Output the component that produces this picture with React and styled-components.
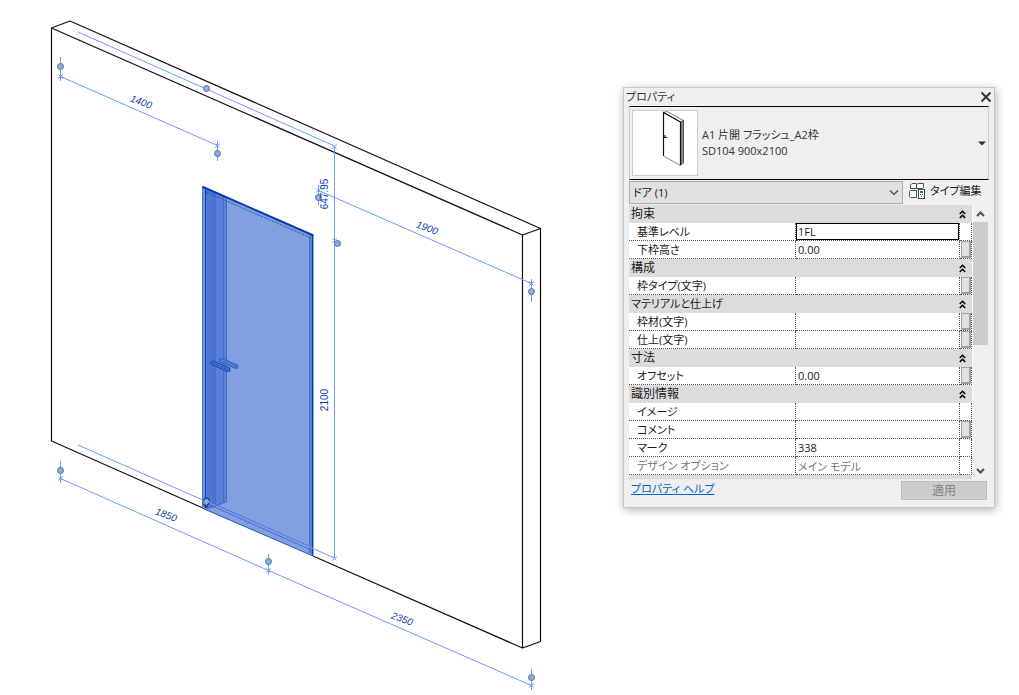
import React, { useState } from 'react';
import styled, { createGlobalStyle } from 'styled-components';

const GlobalStyle = createGlobalStyle`
  * {
    box-sizing: border-box;
  }

  body {
    margin: 0;
    background: #fff;
    color: #1a1a1a;
    font-family: "Open Sans", "Noto Sans CJK JP", sans-serif;
    font-size: 11px;
    line-height: 16px;
    font-feature-settings: "palt";
  }

  button, input, select {
    font: inherit;
    color: inherit;
    font-feature-settings: inherit;
    margin: 0;
    padding: 0;
    border: 0;
    border-radius: 0;
    background: none;
  }
`;

const Page = styled.main`
  display: flex;
  align-items: flex-start;
  padding-right: 24px;
`;

/* ---------- 3D view ---------- */

const View = styled.svg`
  display: block;
  flex: 1;
  min-width: 0;
  height: auto;
`;

const WallLine = styled.path`
  fill: none;
  stroke: #111;
  stroke-width: 1.2;
  stroke-linejoin: round;
`;

const DimLine = styled.path`
  fill: none;
  stroke: #7299fb;
  stroke-width: 1;
`;

const Grip = styled.circle`
  fill: #7db0f5;
  stroke: #68707c;
  stroke-width: 1;
`;

const DimText = styled.text`
  fill: #0a3cab;
  font-family: "Liberation Sans", Arial, sans-serif;
  font-size: 10px;
  font-style: ${props => (props.$slanted ? 'italic' : 'normal')};
  text-anchor: middle;
`;

/* ---------- properties panel ---------- */

const Panel = styled.section`
  flex: 0 0 372px;
  margin-top: 87px;
  padding: 0 5px;
  border: 1px solid #c6c6c6;
  background: #efefef;
  box-shadow: 1px 2px 9px rgba(0, 0, 0, 0.3);
`;

const TitleBar = styled.header`
  display: flex;
  align-items: center;
  justify-content: space-between;
  height: 18px;
  margin: 0 -3px;
`;

const Title = styled.h1`
  margin: 0;
  font-size: 11px;
  font-weight: normal;
  color: #333;
`;

const CloseButton = styled.button`
  display: flex;
  width: 12px;
  height: 12px;
`;

const TypeSelector = styled.button`
  display: flex;
  align-items: center;
  gap: 4px;
  width: 100%;
  height: 74px;
  padding: 0 2px;
  border: 1px solid #ccc;
  border-top-color: #000;
  border-bottom-color: #000;
  text-align: left;
  color: #333;
`;

const Thumbnail = styled.svg`
  flex: none;
  width: 66px;
  height: 66px;
  border: 1px solid #ccc;
  background: #fff;
`;

const TypeName = styled.span`
  flex: 1;
`;

const Line = styled.span`
  display: block;
`;

const Caret = styled.svg`
  flex: none;
  width: 8px;
  height: 5px;
`;

const FilterRow = styled.div`
  display: flex;
  align-items: flex-start;
  height: 25px;
  padding-top: 1px;
  gap: 6px;
`;

const SelectWrap = styled.div`
  position: relative;
  flex: 1;
`;

const FilterSelect = styled.select`
  display: block;
  width: 100%;
  height: 23px;
  padding: 0 3px;
  appearance: none;
  border: 1px solid #adadad;
  background: #e1e1e1;
`;

const SelectArrow = styled.svg`
  position: absolute;
  top: 8px;
  right: 4px;
  width: 10px;
  height: 7px;
  pointer-events: none;
`;

const EditTypeButton = styled.button`
  display: flex;
  align-items: center;
  gap: 4px;
  width: 80px;
  height: 19px;
  white-space: nowrap;
`;

const ListArea = styled.div`
  display: flex;
  gap: 1px;
  height: 274px;
  background: #fafafa;
`;

const Grid = styled.div`
  flex: 1;
  overflow: hidden;
  background: #dcdcdc;
`;

const Table = styled.table`
  width: 100%;
  table-layout: fixed;
  border-collapse: separate;
  border-spacing: 0;
  background: #fff;
`;

const NameCol = styled.col`
  width: 167px;
`;

const ButtonCol = styled.col`
  width: 12px;
`;

const GroupCell = styled.th`
  height: 18px;
  padding: 0 6px 0 2px;
  background: #dcdcdc;
  font-size: ${props => (props.$compact ? '11px' : '12px')};
  font-weight: normal;
  text-align: left;
`;

const GroupBar = styled.div`
  display: flex;
  align-items: center;
  justify-content: space-between;
  height: 18px;
`;

const CollapseButton = styled.button`
  display: flex;
  width: 7px;
  height: 9px;
`;

const NameCell = styled.th`
  height: 18px;
  padding: 0 0 0 8px;
  border-right: 1px dotted #555;
  border-bottom: 1px dotted #555;
  font-weight: normal;
  line-height: 17px;
  text-align: left;
  color: ${props => (props.$muted ? '#777' : '#1a1a1a')};
`;

const ValueCell = styled.td`
  height: 18px;
  padding: 0;
  border-right: 1px dotted #555;
  border-bottom: 1px dotted #555;
`;

const ValueInput = styled.input`
  display: block;
  width: 100%;
  height: 17px;
  padding: ${props => (props.$active ? '0 1px' : '0 2px')};
  border: ${props => (props.$active ? '1px solid #000' : '0')};
  outline: none;
  color: ${props => (props.$muted ? '#777' : '#1a1a1a')};
`;

const MoreButton = styled.button`
  display: block;
  width: 10px;
  height: 17px;
  margin-left: 1px;
  border: 1px solid #a0a0a0;
  border-right-width: 2px;
  border-bottom-width: 2px;
  background: #e1e1e1;
`;

const ScrollBar = styled.div`
  display: flex;
  flex-direction: column;
  width: 16px;
  background: #f0f0f0;
`;

const ScrollButton = styled.button`
  display: flex;
  align-items: center;
  justify-content: center;
  width: 15px;
  height: 17px;
`;

const ScrollTrack = styled.div`
  flex: 1;
`;

const ScrollThumb = styled.div`
  width: 15px;
  height: 123px;
  background: #cdcdcd;
`;

const Footer = styled.footer`
  display: flex;
  align-items: flex-start;
  justify-content: space-between;
  height: 28px;
  padding: 2px 2px 0;
`;

const HelpLink = styled.a`
  color: #0066cc;
  text-decoration: underline;
`;

const ApplyButton = styled.button`
  width: 86px;
  height: 19px;
  border: 1px solid #bfbfbf;
  background: #ccc;
  color: #838383;
  font-size: 12px;
`;

const groups = [
  { title: '拘束', rows: [
    { name: '基準レベル', value: '1FL', active: true },
    { name: '下枠高さ', value: '0.00', more: true },
  ] },
  { title: '構成', rows: [
    { name: '枠タイプ(文字)', value: '', more: true },
  ] },
  { title: 'マテリアルと仕上げ', compact: true, rows: [
    { name: '枠材(文字)', value: '', more: true },
    { name: '仕上(文字)', value: '', more: true },
  ] },
  { title: '寸法', rows: [
    { name: 'オフセット', value: '0.00', more: true },
  ] },
  { title: '識別情報', rows: [
    { name: 'イメージ', value: '' },
    { name: 'コメント', value: '', more: true },
    { name: 'マーク', value: '338' },
    { name: 'デザイン オプション', value: 'メイン モデル', muted: true },
  ] },
];

const grips = [
  [60.5, 66.5], [206.5, 88.5], [217.5, 153.5], [318.5, 197.5], [337.5, 243.5],
  [531.5, 291.5], [60.5, 470.5], [206.5, 501.5], [268.5, 561.5], [531.5, 677.5],
];

// end marks of the dimension lines
const ticks = [
  [60.5, 76.5], [217.5, 145.5], [318.5, 190.5], [531.5, 283.5],
  [60.5, 478.5], [268.5, 570.5], [531.5, 685.5], [334.5, 146.5], [334.5, 240.5], [334.5, 558.5],
];

const dims = [
  { text: '1400', x: 140, y: 105, angle: 20, slanted: true },
  { text: '1900', x: 426, y: 231, angle: 20, slanted: true },
  { text: '1850', x: 165, y: 518, angle: 20, slanted: true },
  { text: '2350', x: 401, y: 622, angle: 20, slanted: true },
  { text: '647.95', x: 328, y: 194, angle: -90 },
  { text: '2100', x: 328, y: 400, angle: -90 },
];

function WallView() {
  return (
    <View viewBox="0 0 623 695" role="img" aria-label="ドア">
      <WallLine d="M51.5 28 L70 21 L540.5 228.5 V641.5 L522.5 648 V235 Z M522.5 235 L540.5 228.5" />
      <WallLine d="M51.5 28 V441 L204 508.5 M313 556 L522.5 648" />

      {/* door */}
      <path d="M202.5 186 L313.5 235.5 V556 L202.5 508 Z" fill="#829fdf" />
      <path d="M202.5 186 L205.5 187.5 V509 L202.5 508 Z" fill="#7294dd" />
      <path d="M205.5 188 L227 198 V502 L214.5 507 L205.5 509 Z" fill="#5c80d6" />
      <path d="M205.5 188 L214.5 192 V507 L205.5 509 Z" fill="#4f77d2" />
      <path d="M309.5 235 L313.5 236 V556 L309.5 552 Z" fill="#5c80d6" />
      <path d="M213.5 192 V507 M215.5 193 V507 M223.5 197 V503 M226.5 198 V501.5 L206 509" fill="none" stroke="#416bcf" />
      <path d="M309.5 236 V553 M212 506 L311 550 M214 504 L311 547" fill="none" stroke="#4870d1" />
      <path d="M202.5 508 V186" fill="none" stroke="#4870d1" />
      <path d="M203 187 L313.5 235.5" fill="none" stroke="#0a3cab" strokeWidth="2" />
      <path d="M206 192 L311 238" fill="none" stroke="#2457c3" strokeDasharray="2 1" />
      <path d="M205.5 189 V508" fill="none" stroke="#0a3cab" />
      <path d="M312.5 236 V556" fill="none" stroke="#0a3cab" />
      <path d="M203 508.5 L313 556" fill="none" stroke="#1d50bd" />
      <path d="M221 360 L236 366.5" stroke="#3d69ca" strokeWidth="5" strokeLinecap="round" />
      <path d="M221 360 L236 366.5" stroke="#658be0" strokeWidth="1" />
      <path d="M213 363 L228 369.5" stroke="#0f42b0" strokeWidth="5" strokeLinecap="round" />
      <path d="M213 363 L228 369.5" stroke="#4f77d2" strokeWidth="3" strokeLinecap="round" />
      <path d="M213 363 L228 369.5" stroke="#0f42b0" strokeWidth="1" strokeDasharray="2 1" />

      <DimLine d="M78 32 L334.5 146 V558 L78 445" />
      <DimLine d="M60.5 76.5 L217.5 145.5 M318.5 190.5 L531.5 283.5 M60.5 478.5 L268.5 570.5 L531.5 685.5" />
      <DimLine d="M60.5 57 V81 M217.5 141 V161 M318.5 185 V205 M531.5 279 V302 M60.5 461 V483 M268.5 554 V575 M531.5 669 V690" />
      {ticks.map(([x, y]) => (
        <DimLine key={`${x}-${y}`} d={`M${x - 2.5} ${y + 2} L${x + 2.5} ${y - 2} M${x - 2} ${y - 2} L${x + 2} ${y + 2}`} />
      ))}
      {grips.map(([x, y]) => (
        <Grip key={`${x}-${y}`} cx={x} cy={y} r="3" />
      ))}
      <path d="M203.5 501 A3 3 0 0 1 209.5 501 M203.5 504 L206 508 L209 503" fill="none" stroke="#0b2b66" />
      {dims.map((dim) => (
        <DimText key={dim.text} $slanted={dim.slanted} transform={`translate(${dim.x} ${dim.y}) rotate(${dim.angle})`}>
          {dim.text}
        </DimText>
      ))}
    </View>
  );
}

function DoorThumbnail() {
  return (
    <Thumbnail viewBox="0 0 64 64" aria-hidden="true">
      <path d="M30.5 1.5 L34 0.5 L50.5 9.5 L47.5 11 Z" fill="#fff" stroke="#777" />
      <path d="M47.5 11 L50.5 9.5 V52 L47.5 54 Z" fill="#888" stroke="#555" />
      <path d="M30.5 45 L47.5 54.5" stroke="#888" />
      <path d="M30.5 45 V1.5 L47.5 11 V54" fill="none" stroke="#111" strokeWidth="1.2" />
      <path d="M31 25 h2 M31 26.5 h3" stroke="#111" />
    </Thumbnail>
  );
}

function TypeIcon() {
  return (
    <svg width="17" height="17" viewBox="0 0 17 17" fill="none" stroke="#4a4d55" aria-hidden="true">
      <path d="M1.5 6.5 V3 L3 1.5 H7.5 V6.5 Z M7.5 6.5 V3 L9 1.5 H14.5 V5.5 L13.5 6.5 Z" fill="#fff" />
      <path d="M1.5 8.5 H7.5 V15.5 H1.5 L0.5 14.5 V9.5 Z" fill="#fff" />
      <rect x="9.5" y="7.5" width="6" height="9" fill="#fff" />
      <path d="M11 10 H14" stroke="#1769c2" strokeWidth="2" />
      <path d="M11 12.5 H12 M13 12.5 H14 M12 14.5 H13" stroke="#4a4d55" />
    </svg>
  );
}

function PropertyGroup({ group, open, onToggle }) {
  return (
    <tbody>
      <tr>
        <GroupCell colSpan={3} scope="colgroup" $compact={group.compact}>
          <GroupBar>
            {group.title}
            <CollapseButton type="button" aria-label={group.title} aria-expanded={open} onClick={onToggle}>
              <svg width="7" height="9" viewBox="0 0 7 9" fill="none" stroke="#000" strokeWidth="1.6">
                <path d="M0.8 4 L3.5 1.3 L6.2 4 M0.8 8 L3.5 5.3 L6.2 8" />
              </svg>
            </CollapseButton>
          </GroupBar>
        </GroupCell>
      </tr>
      {open && group.rows.map((row) => (
        <tr key={row.name}>
          <NameCell scope="row" $muted={row.muted}>{row.name}</NameCell>
          <ValueCell>
            <ValueInput
              type="text"
              aria-label={row.name}
              defaultValue={row.value}
              readOnly={row.muted}
              $active={row.active}
              $muted={row.muted}
            />
          </ValueCell>
          <ValueCell>
            {row.more && <MoreButton type="button" aria-label={row.name} />}
          </ValueCell>
        </tr>
      ))}
    </tbody>
  );
}

function PropertiesPanel() {
  const [closed, setClosed] = useState({});

  const toggle = (title) => {
    setClosed({ ...closed, [title]: !closed[title] });
  };

  return (
    <Panel>
      <TitleBar>
        <Title>プロパティ</Title>
        <CloseButton type="button" aria-label="閉じる">
          <svg width="12" height="12" viewBox="0 0 12 12" stroke="#333" strokeWidth="1.8">
            <path d="M1.5 1.5 L10.5 10.5 M10.5 1.5 L1.5 10.5" />
          </svg>
        </CloseButton>
      </TitleBar>

      <TypeSelector type="button">
        <DoorThumbnail />
        <TypeName>
          <Line>A1 片開 フラッシュ_A2枠</Line>
          <Line>SD104 900x2100</Line>
        </TypeName>
        <Caret viewBox="0 0 8 5"><path d="M0 0.5 H8 L4 4.5 Z" fill="#333" /></Caret>
      </TypeSelector>

      <FilterRow>
        <SelectWrap>
          <FilterSelect aria-label="ドア">
            <option>ドア (1)</option>
          </FilterSelect>
          <SelectArrow viewBox="0 0 10 7" fill="none" stroke="#444" strokeWidth="1.2">
            <path d="M1 1.5 L5 5.5 L9 1.5" />
          </SelectArrow>
        </SelectWrap>
        <EditTypeButton type="button">
          <TypeIcon />
          タイプ編集
        </EditTypeButton>
      </FilterRow>

      <ListArea>
        <Grid>
          <Table>
            <colgroup>
              <NameCol />
              <col />
              <ButtonCol />
            </colgroup>
            {groups.map((group) => (
              <PropertyGroup
                key={group.title}
                group={group}
                open={!closed[group.title]}
                onToggle={() => toggle(group.title)}
              />
            ))}
          </Table>
        </Grid>
        <ScrollBar>
          <ScrollButton type="button" aria-label="上へ">
            <svg width="9" height="6" viewBox="0 0 9 6" fill="none" stroke="#505050" strokeWidth="2">
              <path d="M1 5 L4.5 1.5 L8 5" />
            </svg>
          </ScrollButton>
          <ScrollTrack>
            <ScrollThumb />
          </ScrollTrack>
          <ScrollButton type="button" aria-label="下へ">
            <svg width="9" height="6" viewBox="0 0 9 6" fill="none" stroke="#505050" strokeWidth="2">
              <path d="M1 1 L4.5 4.5 L8 1" />
            </svg>
          </ScrollButton>
        </ScrollBar>
      </ListArea>

      <Footer>
        <HelpLink href="#help">プロパティ ヘルプ</HelpLink>
        <ApplyButton type="button" disabled>適用</ApplyButton>
      </Footer>
    </Panel>
  );
}

function App() {
  return (
    <>
      <GlobalStyle />
      <Page>
        <WallView />
        <PropertiesPanel />
      </Page>
    </>
  );
}

export default App;
